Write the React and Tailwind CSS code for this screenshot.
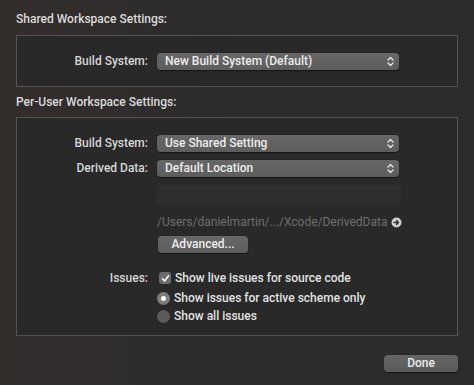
import React from 'react'

const font = { fontFamily: 'Roboto, "Liberation Sans", sans-serif' }

function Chevrons() {
  return (
    <svg width="7" height="11" viewBox="0 0 7 11" className="shrink-0">
      <path d="M1 4 L3.5 1.5 L6 4 M1 7 L3.5 9.5 L6 7" fill="none" stroke="#e8e8e8" strokeWidth="1.3" strokeLinecap="round" strokeLinejoin="round" />
    </svg>
  )
}

function Popup({ value }) {
  return (
    <div className="flex items-center justify-between w-[242px] h-[17px] rounded-[4px] bg-gradient-to-b from-[#676767] to-[#5d5d5d] pl-[8px] pr-[5px] shadow-[0_0.5px_1px_rgba(0,0,0,0.5)]">
      <span className="text-[#ececec]">{value}</span>
      <Chevrons />
    </div>
  )
}

function Row({ label, children }) {
  return (
    <div className="flex items-center h-[17px]">
      <div className="w-[131px] text-right text-[#d6d6d6]">{label}</div>
      <div className="ml-[9px]">{children}</div>
    </div>
  )
}

function Radio({ checked, label }) {
  return (
    <div className="flex items-center h-[18px]">
      <div className={`w-[13px] h-[13px] rounded-full flex items-center justify-center ${checked ? 'bg-[#7c7c7c]' : 'bg-[#5b5b5b]'}`}>
        {checked && <div className="w-[5px] h-[5px] rounded-full bg-white" />}
      </div>
      <span className="ml-[4px] text-[#e2e2e2]">{label}</span>
    </div>
  )
}

export default function App() {
  return (
    <div style={font} className="w-[474px] h-[385px] bg-gradient-to-r from-[#332d2c] via-[#2c2c2c] to-[#2c2c2c] px-[16px] pt-[11px] overflow-hidden text-[12px] font-medium leading-[17px]">
      <div className="h-[17px] text-[#dadada]">Shared Workspace Settings:</div>
      <div className="mt-[7px] h-[52px] border border-[#545454] bg-[#292929] flex items-center">
        <Row label="Build System:">
          <Popup value="New Build System (Default)" />
        </Row>
      </div>

      <div className="mt-[7px] h-[17px] text-[#dadada]">Per-User Workspace Settings:</div>
      <div className="mt-[6px] h-[219px] border border-[#545454] bg-[#292929] pt-[17px]">
        <div className="flex flex-col gap-[8px]">
          <Row label="Build System:">
            <Popup value="Use Shared Setting" />
          </Row>
          <Row label="Derived Data:">
            <Popup value="Default Location" />
          </Row>
        </div>
        <div className="ml-[140px] mt-[8px] w-[244px] h-[20px] bg-[#2e2e2e]" />
        <div className="ml-[140px] mt-[10px] flex items-center h-[14px]">
          <span className="text-[#6e6e6e] font-normal">/Users/danielmartin/.../Xcode/DerivedData</span>
          <svg width="11" height="11" viewBox="0 0 11 11" className="ml-[4px]">
            <circle cx="5.5" cy="5.5" r="5" fill="#d0d0d0" />
            <path d="M3 5.5 H7.5 M5.5 3.5 L7.5 5.5 L5.5 7.5" fill="none" stroke="#2c2c2c" strokeWidth="1.4" strokeLinecap="round" strokeLinejoin="round" />
          </svg>
        </div>
        <div className="ml-[141px] mt-[7px] w-[90px] h-[17px] rounded-[4px] bg-gradient-to-b from-[#676767] to-[#5d5d5d] flex items-center justify-center text-[#ececec] shadow-[0_0.5px_1px_rgba(0,0,0,0.5)]">
          Advanced...
        </div>
        <div className="mt-[16px] flex items-start">
          <div className="w-[131px] text-right text-[#d6d6d6] h-[18px] flex items-center justify-end">Issues:</div>
          <div className="ml-[9px] flex flex-col">
            <div className="flex items-center h-[18px]">
              <div className="ml-[2px] w-[12px] h-[12px] rounded-[3px] bg-[#6c6c6c] flex items-center justify-center">
                <svg width="9" height="9" viewBox="0 0 9 9">
                  <path d="M1.5 4.8 L3.6 7 L7.5 1.8" fill="none" stroke="#fff" strokeWidth="1.5" strokeLinecap="round" strokeLinejoin="round" />
                </svg>
              </div>
              <span className="ml-[4px] text-[#e2e2e2]">Show live issues for source code</span>
            </div>
            <div className="mt-[2px] flex flex-col">
              <Radio checked label="Show issues for active scheme only" />
              <Radio label="Show all issues" />
            </div>
          </div>
        </div>
      </div>

      <div className="mt-[19px] flex justify-end">
        <div className="w-[74px] h-[17px] rounded-[4px] bg-gradient-to-b from-[#656565] to-[#5b5b5b] flex items-center justify-center text-[#ececec] shadow-[0_0.5px_1px_rgba(0,0,0,0.5)]">
          Done
        </div>
      </div>
    </div>
  )
}
